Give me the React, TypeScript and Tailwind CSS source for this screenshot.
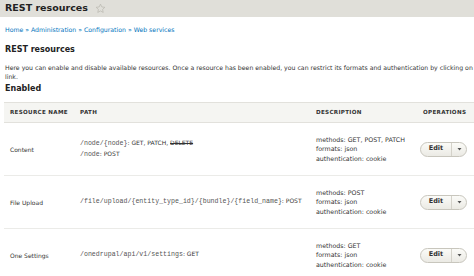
import React from "react";

const sans = "font-['Lucida_Grande','DejaVu_Sans',Verdana,sans-serif]";
const mono = "font-['Liberation_Mono','Courier_New',monospace] text-[6.6px] text-[#555]";

interface Resource {
  name: string;
  paths: React.ReactNode[];
  methods: string;
}

const resources: Resource[] = [
  {
    name: "Content",
    paths: [
      <>
        <span className={mono}>/node/{"{node}"}</span>: GET, PATCH, <span className="line-through">DELETE</span>
      </>,
      <>
        <span className={mono}>/node</span>: POST
      </>,
    ],
    methods: "GET, POST, PATCH",
  },
  {
    name: "File Upload",
    paths: [
      <>
        <span className={mono}>/file/upload/{"{entity_type_id}"}/{"{bundle}"}/{"{field_name}"}</span>: POST
      </>,
    ],
    methods: "POST",
  },
  {
    name: "One Settings",
    paths: [
      <>
        <span className={mono}>/onedrupal/api/v1/settings</span>: GET
      </>,
    ],
    methods: "GET",
  },
];

function EditButton() {
  return (
    <div className="flex h-[15px] w-[47px] items-center rounded-full border border-[#c8c6bd] bg-gradient-to-b from-[#fbfbf8] to-[#ebeae4] text-[#333]">
      <span className="flex-1 text-center text-[6.5px] font-bold">Edit</span>
      <span className="h-full w-px bg-[#d4d2ca]" />
      <span className="flex w-[14px] justify-center">
        <svg width="5" height="4" viewBox="0 0 5 4">
          <path d="M0.5 1 L4.5 1 L2.5 3.5 Z" fill="#555" />
        </svg>
      </span>
    </div>
  );
}

export default function App() {
  return (
    <div className={`h-[276px] w-[474px] overflow-hidden bg-white text-[#333] ${sans}`}>
      {/* Title band */}
      <div className="flex h-[17px] items-center gap-[7px] bg-[#e0dfd9] pl-[5px]">
        <h1 className="text-[9.5px] font-bold text-[#222]">REST resources</h1>
        <svg width="11" height="11" viewBox="0 0 24 24" className="-mt-[1px]">
          <path
            d="M12 2.5l2.9 6.1 6.6.8-4.9 4.6 1.3 6.6L12 17.3l-5.9 3.3 1.3-6.6-4.9-4.6 6.6-.8z"
            fill="none"
            stroke="#b8b6ae"
            strokeWidth="1.5"
            strokeLinejoin="round"
          />
        </svg>
      </div>

      <div className="w-[520px] px-[5px]">
        {/* Breadcrumb */}
        <div className="mt-[8px] text-[6.2px] leading-[10px] text-[#0074bd]">
          Home » Administration » Configuration » Web services
        </div>

        <h2 className="mt-[9px] text-[8px] font-bold leading-[12px] text-[#222]">REST resources</h2>

        <p className="mt-[7px] text-[6.2px] leading-[9px]">
          Here you can enable and disable available resources. Once a resource has been enabled, you can restrict its
          formats and authentication by clicking on its "Edit"
          <br />
          link.
        </p>

        <h3 className="mt-[2px] text-[8px] font-bold leading-[12px] text-[#222]">Enabled</h3>
      </div>

      {/* Table */}
      <div className="ml-[4px] mt-[7px] w-[490px]">
        <div className="grid h-[21px] grid-cols-[70px_236px_104px_1fr] items-center border-y border-[#e2e1dc] bg-[#f5f5f2] text-[5.6px] font-bold uppercase tracking-[0.3px] text-[#333]">
          <div className="pl-[6px]">Resource name</div>
          <div className="pl-[6px]">Path</div>
          <div className="pl-[6px]">Description</div>
          <div className="pl-[9px]">Operations</div>
        </div>
        {resources.map((r) => (
          <div
            key={r.name}
            className="grid h-[53px] grid-cols-[70px_236px_104px_1fr] items-center border-b border-[#ebebe8] text-[6px]"
          >
            <div className="pl-[6px]">{r.name}</div>
            <div className="pl-[6px] leading-[10.5px]">
              {r.paths.map((p, i) => (
                <div key={i}>{p}</div>
              ))}
            </div>
            <div className="pl-[6px] text-[6.3px] leading-[9.5px]">
              <div>methods: {r.methods}</div>
              <div>formats: json</div>
              <div>authentication: cookie</div>
            </div>
            <div className="pl-[6px]">
              <EditButton />
            </div>
          </div>
        ))}
      </div>
    </div>
  );
}
